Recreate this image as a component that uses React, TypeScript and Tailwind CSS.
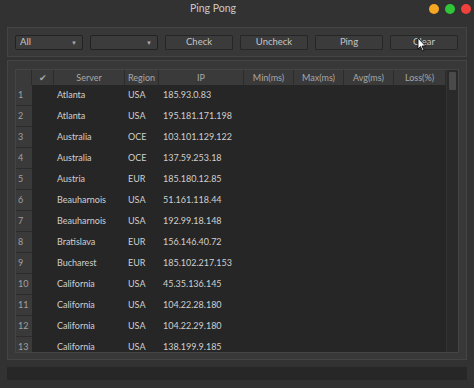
const rows = [
  ['Atlanta', 'USA', '185.93.0.83'],
  ['Atlanta', 'USA', '195.181.171.198'],
  ['Australia', 'OCE', '103.101.129.122'],
  ['Australia', 'OCE', '137.59.253.18'],
  ['Austria', 'EUR', '185.180.12.85'],
  ['Beauharnois', 'USA', '51.161.118.44'],
  ['Beauharnois', 'USA', '192.99.18.148'],
  ['Bratislava', 'EUR', '156.146.40.72'],
  ['Bucharest', 'EUR', '185.102.217.153'],
  ['California', 'USA', '45.35.136.145'],
  ['California', 'USA', '104.22.28.180'],
  ['California', 'USA', '104.22.29.180'],
  ['California', 'USA', '138.199.9.185'],
]

const cols = [
  { label: '✔', w: 'w-[22px]' },
  { label: 'Server', w: 'w-[71px]' },
  { label: 'Region', w: 'w-[34px]' },
  { label: 'IP', w: 'w-[85px]' },
  { label: 'Min(ms)', w: 'w-[50px]' },
  { label: 'Max(ms)', w: 'w-[50px]' },
  { label: 'Avg(ms)', w: 'w-[50px]' },
  { label: 'Loss(%)', w: 'w-[52px]' },
]

const Combo = ({ label }: { label: string }) => (
  <div className="flex w-[68px] h-[15px] items-center justify-between rounded-[2px] border border-[#222] bg-[#3c3c3c] pl-1 pr-[5px] text-[9.5px] text-[#c8c8c8]">
    <span>{label}</span>
    <span className="text-[6px] text-[#aaa]">▼</span>
  </div>
)

const Button = ({ label }: { label: string }) => (
  <div className="flex w-[68px] h-[15px] items-center justify-center rounded-[1px] border border-[#262626] bg-[#3b3b3b] text-[9.5px] text-[#c4c4c4]">
    {label}
  </div>
)

const App = () => {
  return (
    <div
      className="flex h-[388px] w-[474px] flex-col bg-[#323232] text-[#d0d0d0]"
      style={{ fontFamily: 'Lato, "Noto Sans", sans-serif' }}
    >
      <div className="relative flex h-[27px] shrink-0 items-start justify-center pt-[1px] pr-[48px] text-[10.5px] text-[#c8c8c8]">
        Ping Pong
        <div className="absolute right-[3px] top-[4px] flex gap-[6px]">
          <div className="h-[10px] w-[10px] rounded-full bg-[#f5a623]" />
          <div className="h-[10px] w-[10px] rounded-full bg-[#2fc63a]" />
          <div className="h-[10px] w-[10px] rounded-full bg-[#f0413c]" />
        </div>
      </div>

      <div className="mx-[7px] flex h-[30px] items-center gap-[7px] border border-[#444] bg-[#383838] px-[7px]">
        <Combo label="All" />
        <Combo label="" />
        <Button label="Check" />
        <Button label="Uncheck" />
        <Button label="Ping" />
        <div className="relative">
          <Button label="Clear" />
          <svg className="absolute left-[27px] top-[2px]" width="10" height="15" viewBox="0 0 10 15">
            <path d="M1 1 L1 12 L3.5 9.5 L5.5 14 L7 13.3 L5 9 L8.5 9 Z" fill="#fff" stroke="#000" strokeWidth="0.8" />
          </svg>
        </div>
      </div>

      <div className="mx-[7px] mt-[3px] flex h-[300px] flex-col border border-[#444] bg-[#383838] px-[7px] pt-[8px] pb-[6px]">
        <div className="flex flex-1 overflow-hidden border border-[#444] bg-[#262626]">
          <div className="flex flex-col w-[434px] overflow-hidden">
            <div className="flex h-[15px] shrink-0 bg-[#3a3a3a] text-[9px] text-[#a8a8a8]">
              <div className="w-[16px] border-r border-[#2c2c2c]" />
              {cols.map((c) => (
                <div key={c.label} className={`${c.w} flex items-center justify-center border-r border-[#2c2c2c]`}>
                  {c.label}
                </div>
              ))}
            </div>
            {rows.map((r, i) => (
              <div key={i} className="flex h-[21px] shrink-0 text-[9px] text-[#cfcfcf]">
                <div className="flex w-[16px] items-center border-b border-[#2c2c2c] bg-[#3a3a3a] pl-[2px] pb-[1px] text-[9px] text-[#a0a0a0]">
                  {i + 1}
                </div>
                <div className="w-[22px]" />
                <div className="flex w-[71px] items-center pl-[3px] pb-[2px]">{r[0]}</div>
                <div className="flex w-[34px] items-center pl-[3px] pb-[2px]">{r[1]}</div>
                <div className="flex w-[85px] items-center pl-[4px] pb-[2px]">{r[2]}</div>
              </div>
            ))}
          </div>
          <div className="flex-1" />
          <div className="w-[12px] border-l border-[#333] bg-[#2a2a2a] pt-[2px] pl-[2px]">
            <div className="h-[18px] w-[7px] rounded-[1px] bg-[#4a4a4a]" />
          </div>
        </div>
      </div>

      <div className="mx-[7px] mt-[7px] h-[13px] bg-[#272727]" />
    </div>
  )
}

export default App
